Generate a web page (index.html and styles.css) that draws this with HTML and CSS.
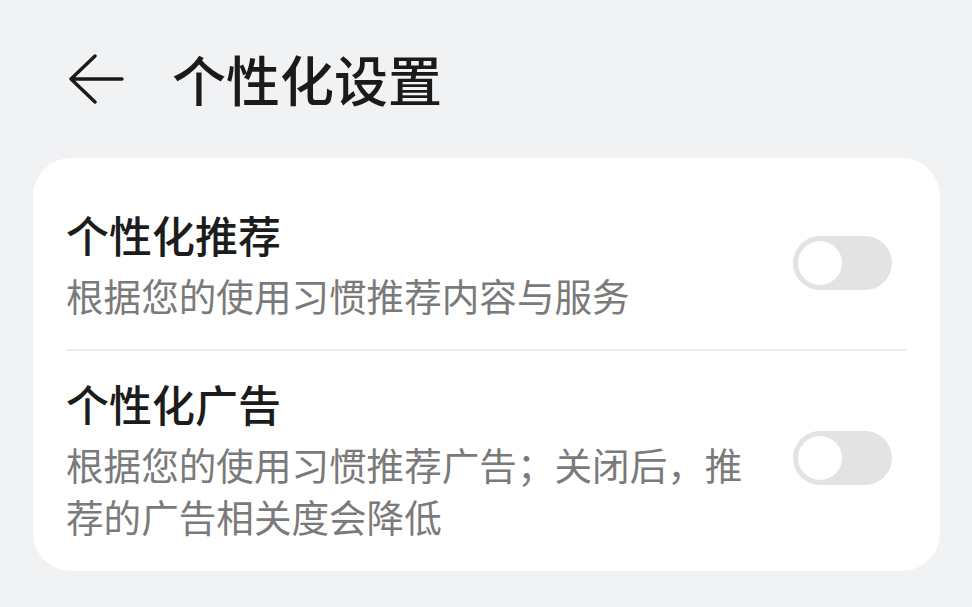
FILE: index.html
```html
<!DOCTYPE html>
<html lang="zh-CN">

<head>
    <meta charset="UTF-8">
    <meta name="viewport" content="width=device-width, initial-scale=1.0">
    <title>个性化设置</title>
    <link rel="stylesheet" href="styles.css">
</head>

<body>

    <div class="page">
        <!-- Top bar -->
        <div class="top-bar">
            <a href="#" class="back-btn" aria-label="返回">
                <svg width="56" height="50" viewBox="0 0 56 50">
                    <path d="M27 2 L3 25 L27 48 M3 25 H54" fill="none" stroke="#1a1a1a" stroke-width="3.4"
                        stroke-linecap="round" stroke-linejoin="round" />
                </svg>
            </a>
            <h1>个性化设置</h1>
        </div>

        <!-- Settings card -->
        <div class="card">
            <div class="setting-item">
                <div class="setting-text">
                    <h2>个性化推荐</h2>
                    <p>根据您的使用习惯推荐内容与服务</p>
                </div>
                <label class="switch">
                    <input type="checkbox">
                    <span class="slider"></span>
                </label>
            </div>

            <div class="setting-item">
                <div class="setting-text">
                    <h2>个性化广告</h2>
                    <p>根据您的使用习惯推荐广告；关闭后，推荐的广告相关度会降低</p>
                </div>
                <label class="switch">
                    <input type="checkbox">
                    <span class="slider"></span>
                </label>
            </div>
        </div>
    </div>

</body>

</html>
```

FILE: styles.css
```css
/* Reset */
* {
    margin: 0;
    padding: 0;
    box-sizing: border-box;
    font-family: 'Noto Sans CJK SC', 'Noto Sans', sans-serif;
}

body {
    background: #f1f2f4;
    width: 972px;
    height: 607px;
    overflow: hidden;
}

.page {
    padding: 0 32px 0 33px;
}

/* Top bar */
.top-bar {
    display: flex;
    align-items: center;
    height: 70px;
    margin: 44px 0 44px;
    padding-left: 35px;
}

.back-btn {
    display: flex;
    width: 56px;
    height: 50px;
    margin-right: 48px;
}

.top-bar h1 {
    font-size: 54px;
    font-weight: 500;
    line-height: 70px;
    color: #1a1a1a;
}

/* Card */
.card {
    background: #fff;
    border-radius: 38px;
    padding: 24px 33px 1px;
}

.setting-item {
    display: flex;
    align-items: center;
    padding: 22px 0 28px;
}

.setting-item + .setting-item {
    border-top: 2px solid #ececec;
}

.setting-text {
    flex: 1;
    min-width: 0;
    margin-right: 40px;
}

.setting-text h2 {
    font-size: 43px;
    font-weight: 500;
    line-height: 60px;
    color: #1c1c1c;
}

.setting-text p {
    margin-top: 5px;
    font-size: 37.6px;
    line-height: 52px;
    color: #7a7a7a;
}

/* Toggle switch */
.switch {
    position: relative;
    display: block;
    width: 99px;
    height: 54px;
    margin-right: 15px;
    flex-shrink: 0;
}

.switch input {
    display: none;
}

.slider {
    position: absolute;
    inset: 0;
    background: #e3e3e3;
    border-radius: 27px;
    cursor: pointer;
}

.slider::before {
    content: "";
    position: absolute;
    left: 5px;
    top: 5px;
    width: 44px;
    height: 44px;
    border-radius: 50%;
    background: #fff;
}
```
